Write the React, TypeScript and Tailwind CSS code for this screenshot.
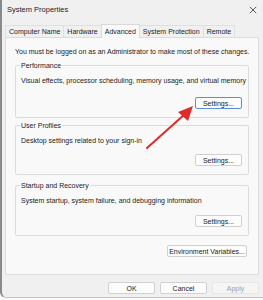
import React from "react";

const font = { fontFamily: '"Liberation Sans", Arial, sans-serif' };

const Btn = ({ label, w, focused, disabled }: { label: string; w: string; focused?: boolean; disabled?: boolean }) => (
    <div
        className={`${w} h-[12px] flex items-center justify-center whitespace-nowrap rounded-[2px] border text-[7px] leading-none ${
            focused
                ? "border-[#5b8fd6] bg-[#fdfdfd] text-[#1b1b1b]"
                : disabled
                ? "border-[#e6e6e6] bg-[#f5f5f5] text-[#a0a0a0]"
                : "border-[#d0d0d0] bg-[#fdfdfd] text-[#1b1b1b]"
        }`}
    >
        {label}
    </div>
);

const Group = ({ title, text, h, focused }: { title: string; text: string; h: string; focused?: boolean }) => (
    <div className={`relative border border-[#dcdcdc] rounded-[2px] ${h} flex flex-col px-[5px]`}>
        <span className="absolute -top-[5px] left-[4px] bg-[#f9f9f9] px-[1px] text-[7px] leading-[9px] text-[#1b1b1b] whitespace-nowrap">
            {title}
        </span>
        <div className="mt-[10px] text-[7px] leading-[9px] text-[#1b1b1b] whitespace-nowrap">{text}</div>
        <div className="mt-auto mb-[8px] flex justify-end pr-[1px]">
            <Btn label="Settings..." w="w-[47px]" focused={focused} />
        </div>
    </div>
);

const App = () => {
    const tabs = ["Computer Name", "Hardware", "Advanced", "System Protection", "Remote"];
    return (
        <div className="w-[263px] h-[300px] bg-[#fafafa] relative overflow-hidden" style={font}>
            <div className="absolute left-0 top-0 w-[263px] h-[298px] bg-[#f0f0f0] border-l-[2px] border-b border-l-[#8a8a8a] border-b-[#c4c4c4] rounded-bl-[6px] flex flex-col">
                <div className="h-[20px] flex items-center justify-between pl-[5px] pr-[4px] text-[7.5px] text-[#1b1b1b]">
                    <span>System Properties</span>
                    <svg width="8" height="8" viewBox="0 0 10 10" className="mr-[2px]">
                        <path d="M1 1 L9 9 M9 1 L1 9" stroke="#333" strokeWidth="1" />
                    </svg>
                </div>
                <div className="flex items-end pl-[3px] mt-[5px] h-[12px] text-[7px] leading-none text-[#1b1b1b] relative z-10">
                    {tabs.map((t) =>
                        t === "Advanced" ? (
                            <div key={t} className="h-[14px] px-[3px] flex items-center whitespace-nowrap border border-b-0 border-[#d9d9d9] bg-[#f9f9f9] -mb-[1px] -ml-[1px]">
                                {t}
                            </div>
                        ) : (
                            <div key={t} className="h-[12px] px-[3px] flex items-center whitespace-nowrap border border-b-0 border-[#e0e0e0] bg-[#f0f0f0] -ml-[1px] first:ml-0">
                                {t}
                            </div>
                        )
                    )}
                </div>
                <div className="ml-[3px] mr-[4px] h-[238px] border border-[#dcdcdc] bg-[#f9f9f9] flex flex-col px-[9px]">
                    <div className="mt-[9px] text-center text-[7px] leading-[9px] text-[#1b1b1b] whitespace-nowrap">
                        You must be logged on as an Administrator to make most of these changes.
                    </div>
                    <div className="mt-[9px] flex flex-col">
                        <Group title="Performance" text="Visual effects, processor scheduling, memory usage, and virtual memory" h="h-[53px]" focused />
                        <div className="h-[7px]" />
                        <Group title="User Profiles" text="Desktop settings related to your sign-in" h="h-[50px]" />
                        <div className="h-[10px]" />
                        <Group title="Startup and Recovery" text="System startup, system failure, and debugging information" h="h-[51px]" />
                    </div>
                    <div className="mt-[9px] flex justify-end pr-[2px]">
                        <Btn label="Environment Variables..." w="w-[80px]" />
                    </div>
                </div>
                <div className="mt-[7px] flex justify-end gap-[5px] pr-[4px]">
                    <Btn label="OK" w="w-[47px]" />
                    <Btn label="Cancel" w="w-[47px]" />
                    <Btn label="Apply" w="w-[47px]" disabled />
                </div>
            </div>
            <svg className="absolute left-0 top-0" width="263" height="300" viewBox="0 0 263 300">
                <line x1="147" y1="148" x2="185" y2="114" stroke="#e02b2b" strokeWidth="2" strokeLinecap="round" />
                <path d="M193 106 L178 112 L188 121 Z" fill="#e02b2b" />
            </svg>
        </div>
    );
};

export default App;
